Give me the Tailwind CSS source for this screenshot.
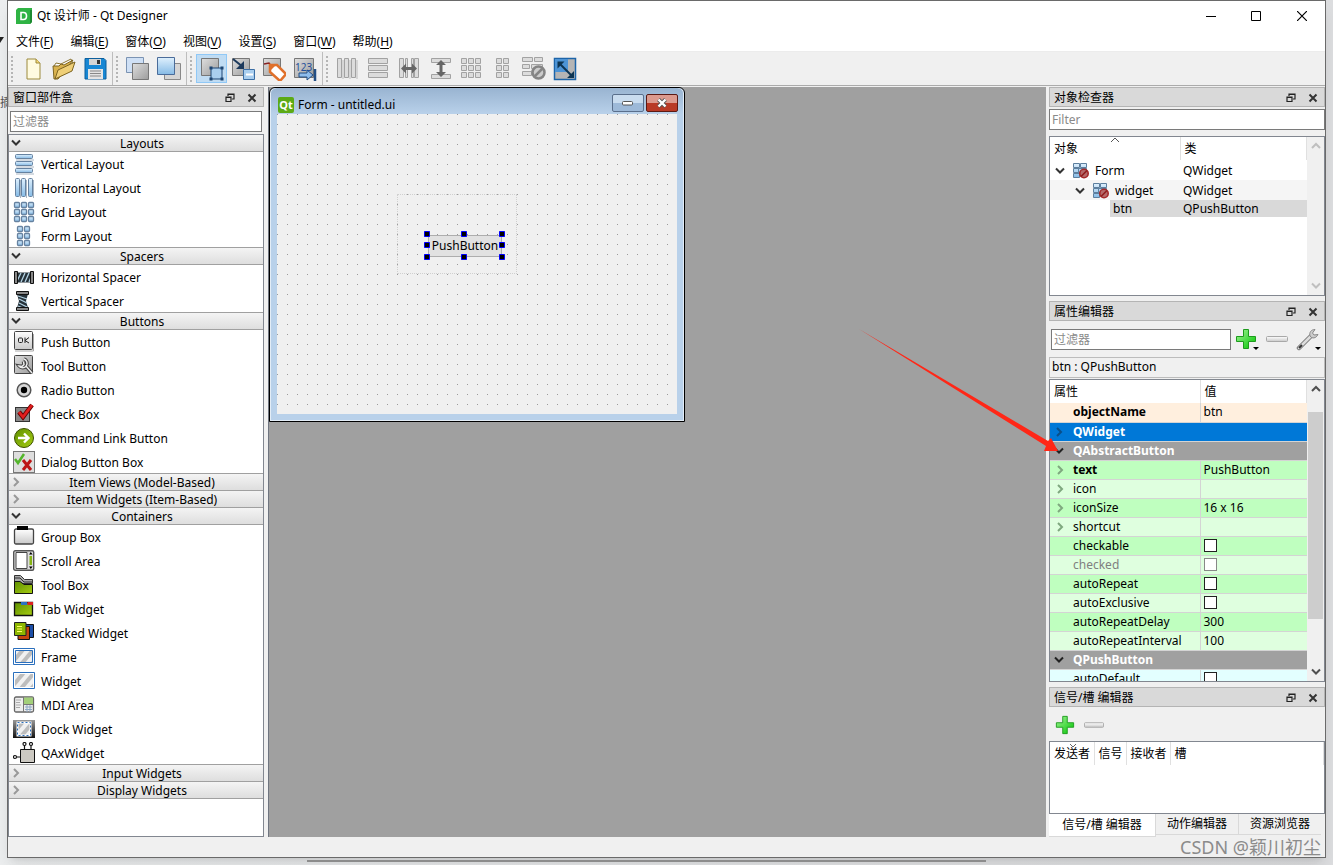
<!DOCTYPE html>
<html lang="zh-CN">
<head>
  <meta charset="UTF-8" />
  <meta name="viewport" content="width=device-width, initial-scale=1" />
  <title>Qt 设计师 - Qt Designer</title>
  <script src="https://cdn.jsdelivr.net/npm/@tailwindcss/browser@4"></script>
  <style>
    body { font-family: "Noto Sans", "Noto Sans CJK SC", sans-serif; }
    u { text-underline-offset: 2px; }
  </style>
</head>
<body class="relative flex h-screen flex-col overflow-hidden bg-linear-to-r from-[#eceeef] to-[#dcdddf] text-xs leading-4 text-black">

<!-- shared gradients and icons -->
<svg class="absolute h-0 w-0" aria-hidden="true">
  <defs>
    <linearGradient id="blue" x1="0" y1="0" x2="0" y2="1"><stop offset="0" stop-color="#dff0fd"/><stop offset="1" stop-color="#86bbe6"/></linearGradient>
    <linearGradient id="grey" x1="0" y1="0" x2="1" y2="1"><stop offset="0" stop-color="#dedede"/><stop offset="1" stop-color="#9c9c9c"/></linearGradient>
    <linearGradient id="pale" x1="0" y1="0" x2="0" y2="1"><stop offset="0" stop-color="#fff"/><stop offset="1" stop-color="#c9c9c9"/></linearGradient>
    <linearGradient id="green" x1="0" y1="0" x2="1" y2="1"><stop offset="0" stop-color="#a5f598"/><stop offset="1" stop-color="#00c400"/></linearGradient>
    <linearGradient id="olive" x1="0" y1="0" x2="1" y2="1"><stop offset="0" stop-color="#5f9000"/><stop offset="1" stop-color="#a6cc12"/></linearGradient>
    <linearGradient id="dark" x1="0" y1="0" x2="0" y2="1"><stop offset="0" stop-color="#999"/><stop offset="1" stop-color="#111"/></linearGradient>
    <pattern id="stripes" width="8" height="8" patternUnits="userSpaceOnUse" patternTransform="rotate(40)"><rect width="8" height="8" fill="#f1f1f1"/><rect width="4" height="8" fill="#bdbdbd"/></pattern>
    <pattern id="dots" width="10" height="10" patternUnits="userSpaceOnUse"><rect width="1" height="1" fill="#9a9a9a"/></pattern>
  </defs>
  <symbol id="down" viewBox="0 0 10 10"><path d="M1 2.500 5 6.500 9 2.500" fill="none" stroke="currentColor" stroke-width="2"/></symbol>
  <symbol id="right" viewBox="0 0 10 10"><path d="M3 1 7 5 3 9" fill="none" stroke="currentColor" stroke-width="2"/></symbol>
  <symbol id="up" viewBox="0 0 10 10"><path d="M1 7 5 3 9 7" fill="none" stroke="currentColor" stroke-width="2"/></symbol>
  <symbol id="float" viewBox="0 0 10 10"><path d="M3 3V1h6v5H7M3 1.500h6M1 4h5v4.500H1zM1 4.500h5" fill="none" stroke="#222" stroke-width="1.200"/></symbol>
  <symbol id="close" viewBox="0 0 10 10"><path d="M1.500 1.500 8.500 8.500M8.500 1.500 1.500 8.500" stroke="#333" stroke-width="2"/></symbol>
  <symbol id="plus" viewBox="0 0 22 22"><path d="M8.500 1.500h5v7h7v5h-7v7h-5v-7h-7v-5h7z" fill="url(#green)" stroke="#1d9b1d"/></symbol>
  <symbol id="minus" viewBox="0 0 22 22"><rect x="0.500" y="8.500" width="21" height="5" rx="1" fill="url(#pale)" stroke="#a8a8a8"/></symbol>

  <!-- toolbox icons -->
  <symbol id="vlay" viewBox="0 0 22 22"><g fill="url(#blue)" stroke="#6682a0"><rect x="2.500" y="1.500" width="17" height="4" rx="1"/><rect x="2.500" y="8.500" width="17" height="4" rx="1"/><rect x="2.500" y="15.500" width="17" height="4" rx="1"/></g><path d="M3 7h18M3 14h18M3 21h18" stroke="#a9b6c4"/></symbol>
  <symbol id="hlay" viewBox="0 0 22 22"><g fill="url(#blue)" stroke="#6682a0"><rect x="2.500" y="1.500" width="4" height="18" rx="1"/><rect x="8.500" y="1.500" width="4" height="18" rx="1"/><rect x="15.500" y="1.500" width="4" height="18" rx="1"/></g><path d="M7.500 3v18M13.500 3v18M20.500 3v18" stroke="#a9b6c4"/></symbol>
  <symbol id="grid" viewBox="0 0 22 22"><g fill="url(#blue)" stroke="#6682a0" stroke-width="1.300"><rect x="1.500" y="1.500" width="5" height="5" rx="1"/><rect x="8.500" y="1.500" width="5" height="5" rx="1"/><rect x="15.500" y="1.500" width="5" height="5" rx="1"/><rect x="1.500" y="8.500" width="5" height="5" rx="1"/><rect x="8.500" y="8.500" width="5" height="5" rx="1"/><rect x="15.500" y="8.500" width="5" height="5" rx="1"/><rect x="1.500" y="15.500" width="5" height="5" rx="1"/><rect x="8.500" y="15.500" width="5" height="5" rx="1"/><rect x="15.500" y="15.500" width="5" height="5" rx="1"/></g></symbol>
  <symbol id="form" viewBox="0 0 22 22"><g fill="url(#blue)" stroke="#6682a0" stroke-width="1.300"><rect x="4.500" y="1.500" width="5" height="5" rx="1"/><rect x="11.500" y="1.500" width="5" height="5" rx="1"/><rect x="4.500" y="8.500" width="5" height="5" rx="1"/><rect x="11.500" y="8.500" width="5" height="5" rx="1"/><rect x="4.500" y="15.500" width="5" height="5" rx="1"/><rect x="11.500" y="15.500" width="5" height="5" rx="1"/></g></symbol>
  <symbol id="hspace" viewBox="0 0 22 22"><path d="M4 6.500h14v10H4z" fill="#26323a"/><path d="M4 15 8 7M8 16 12 7M12 16 16 7M16 16 18 11" stroke="#b4d3e4" stroke-width="1.300"/><path d="M1.500 5.500h3v12h-3zM17.500 5.500h3v12h-3z" fill="#888" stroke="#111"/></symbol>
  <symbol id="vspace" viewBox="0 0 22 22"><path d="M4 4h11l-2 7 2 7H4l2-7z" fill="#26323a"/><path d="M5 6 14 9M6 9 14 13M6 13 14 17M5 16l5 2" stroke="#b4d3e4" stroke-width="1.300"/><path d="M3.500 1.500h12v3h-12zM3.500 17.500h12v3h-12z" fill="#888" stroke="#111"/></symbol>
  <symbol id="push" viewBox="0 0 22 22"><rect x="1.500" y=".5" width="18" height="18" rx="1" fill="url(#pale)" stroke="#444"/><path d="M2 20h18.500V3" fill="none" stroke="#aaa"/><g fill="none" stroke="#222"><rect x="5.500" y="7" width="4" height="4.500" rx="1"/><path d="M12 6.500v5.500M16 6.500l-4 3 4 2.500"/></g></symbol>
  <symbol id="tool" viewBox="0 0 22 22"><rect x="1.500" y=".5" width="18" height="18" rx="1" fill="url(#grey)" stroke="#444"/><path d="M11 4a4.500 4.500 0 1 1-5 7l3 .5 2-2-.5-3M13 11l6 7" fill="none" stroke="#444" stroke-width="3.500"/><path d="M11 4a4.500 4.500 0 1 1-5 7l3 .5 2-2-.5-3M13 11l6 7" fill="none" stroke="#eee" stroke-width="1.500"/></symbol>
  <symbol id="radio" viewBox="0 0 22 22"><circle cx="11" cy="11" r="6.800" fill="#d8d8d8" stroke="#555" stroke-width="1.500"/><circle cx="11" cy="11" r="3.200"/></symbol>
  <symbol id="check" viewBox="0 0 22 22"><rect x="2.500" y="4.500" width="14" height="14" fill="#888" stroke="#333"/><path d="M6 9l4 5L19 2" fill="none" stroke="#600" stroke-width="4.500"/><path d="M6 9l4 5L19 2" fill="none" stroke="#e11d1d" stroke-width="2.800"/></symbol>
  <symbol id="command" viewBox="0 0 22 22"><circle cx="11" cy="11" r="9.500" fill="url(#olive)" stroke="#3d5000"/><path d="M5 11h10M11 6.500l4.500 4.500-4.500 4.500" fill="none" stroke="#fff" stroke-width="2.400"/></symbol>
  <symbol id="dialog" viewBox="0 0 22 22"><rect x=".5" y=".5" width="21" height="21" fill="#dedede" stroke="#777"/><path d="M2 8l3 4 6-9" fill="none" stroke="#54b52c" stroke-width="2.500"/><path d="M10 9l8 10M18 9l-8 10" stroke="#bd1616" stroke-width="3"/></symbol>
  <symbol id="group" viewBox="0 0 22 22"><rect x="1.500" y="3" width="19" height="15" rx="1.500" fill="url(#pale)" stroke="#444" stroke-width="1.300"/><path d="M4 0h11v4H4z"/></symbol>
  <symbol id="scroll" viewBox="0 0 22 22"><rect x=".7" y=".7" width="20" height="19.500" rx="1.500" fill="#ddd" stroke="#555" stroke-width="1.400"/><path d="M3 2.500h11v16H3z" fill="#fff" stroke="#444"/><path d="M16.500 6h2.500v9h-2.500z" fill="#86b414"/><path d="M17.800 2l1.800 2.500H16zM17.800 19l1.800-2.500H16z"/></symbol>
  <symbol id="toolbox" viewBox="0 0 22 22"><path d="M1.500 1.500h6l4 4h8v4h-18z" fill="#aaa" stroke="#333"/><path d="M2 4h5l4 4h8" fill="none" stroke="#333"/><path d="M1.500 7.500H7l4 3h8.500v9h-18z" fill="url(#olive)" stroke="#111"/></symbol>
  <symbol id="tab" viewBox="0 0 22 22"><path d="M1.500 4.500h18v13h-18z" fill="url(#olive)" stroke="#111" stroke-width="1.300"/><path d="M8 4h6v3H8z" fill="#2b73c2"/><path d="M14.500 4H20v3h-5.500z" fill="#d22"/></symbol>
  <symbol id="stack" viewBox="0 0 22 22"><path d="M12 2.500h8.500v13H12z" fill="#1d4fa8" stroke="#111"/><path d="M5 4.500h11.500v13H5z" fill="#c4430e" stroke="#111"/><path d="M1.500 .5h11.500v13H1.500z" fill="#8db600" stroke="#222"/><path d="M4 4.500h5M4 7h5M4 9.500h5" stroke="#ff6"/></symbol>
  <symbol id="frame" viewBox="0 0 22 22"><path d="M.5 2.500h21v16H.5z" fill="#fff" stroke="#2a6fbd"/><path d="M2.500 4.500h17v12h-17z" fill="url(#stripes)" stroke="#2a6fbd"/></symbol>
  <symbol id="widget" viewBox="0 0 22 22"><path d="M.5 2.500h21v16H.5z" fill="#fff" stroke="#2a6fbd"/><path d="M2 4h18v13H2z" fill="url(#stripes)"/></symbol>
  <symbol id="mdi" viewBox="0 0 22 22"><rect x="1.500" y="3" width="19" height="15" rx="1.500" fill="#eee" stroke="#666" stroke-width="1.300"/><path d="M11 3.500h9v7h-9z" fill="#a2cf7a"/><path d="M10.500 3v15M10.500 10.500H20" stroke="#777"/><path d="M3 6h5M3 8.500h4M3 11h5M3 13.500h4" stroke="#aaa"/><path d="M12 13h7M12 15.500h7M14 11v7M17 11v7" stroke="#8fa9c6"/></symbol>
  <symbol id="dock" viewBox="0 0 22 22"><path d="M0 2h22v18H0z" fill="url(#dark)"/><path d="M4.500 4.500h13v13h-13z" fill="url(#stripes)" stroke="#fff" stroke-width="2"/><path d="M4.500 4.500h13v13h-13z" fill="none" stroke="#2a6fbd" stroke-dasharray="2 2"/></symbol>
  <symbol id="ax" viewBox="0 0 22 22"><path d="M7.500 7.500h14v13h-14z" fill="#ccc9c2" stroke="#111"/><path d="M11.500 7V3M18 7V3M7 15H4" stroke="#111" stroke-width="1.200"/><g fill="#fff" stroke="#111" stroke-width="1.200"><circle cx="11.500" cy="2" r="1.500"/><circle cx="18" cy="2" r="1.500"/><circle cx="2" cy="15" r="1.500"/></g></symbol>
  <symbol id="nolayout" viewBox="0 0 16 16"><g fill="url(#blue)" stroke="#5d7f9e"><path d="M.5.500h6v4h-6zM7.500.500h6v4h-6zM.5 5.500h5v4h-5zM5.500 5.500h8v4h-8zM.5 10.500h6v4h-6z"/></g><circle cx="11" cy="10.500" r="4.200" fill="#b56a6a" stroke="#a52a2a" stroke-width="1.600"/><path d="M8 13.500l6-6" stroke="#8f1d1d" stroke-width="1.600"/></symbol>
</svg>

<!-- Main window -->
<div class="mx-[7px] mb-[7px] flex min-h-0 flex-1 flex-col border border-[#6a6a6a] bg-[#f0f0f0] shadow-lg">

  <header class="flex h-[30px] shrink-0 items-center bg-white pl-2">
    <svg class="h-4 w-4" viewBox="0 0 16 16"><path d="M2 0h14v14l-2 2H0V2z" fill="#2fb344"/><path d="M14 16V2h2v12z" fill="#1c8a30"/><path d="M5 4.500h2.500c4 0 4 7 0 7H5z" fill="none" stroke="#fff" stroke-width="1.600"/></svg>
    <h1 class="ml-[5px]">Qt 设计师 - Qt Designer</h1>
    <div class="ml-auto flex">
      <button class="flex h-[28px] w-[45px] items-center justify-center" aria-label="最小化"><svg class="h-[10px] w-[10px]"><path d="M0 5.500h10" stroke="#000"/></svg></button>
      <button class="flex h-[28px] w-[46px] items-center justify-center" aria-label="最大化"><svg class="h-[10px] w-[10px]"><path d="M.5.500h9v9h-9z" fill="none" stroke="#000"/></svg></button>
      <button class="flex h-[28px] w-[46px] items-center justify-center" aria-label="关闭"><svg class="h-[10px] w-[10px]"><path d="M0 0 10 10M10 0 0 10" stroke="#000" stroke-width="1.200"/></svg></button>
    </div>
  </header>

  <nav class="flex h-[21px] shrink-0 items-center gap-[17px] border-b border-[#ececec] bg-white pt-[2px] pl-2">
    <button>文件(<u>F</u>)</button>
    <button>编辑(<u>E</u>)</button>
    <button>窗体(<u>O</u>)</button>
    <button>视图(<u>V</u>)</button>
    <button>设置(<u>S</u>)</button>
    <button>窗口(<u>W</u>)</button>
    <button>帮助(<u>H</u>)</button>
  </nav>

  <div id="toolbar" class="flex h-[34px] shrink-0 items-center border-b border-[#ababab]"></div>

  <div class="flex min-h-0 flex-1 pt-px">

    <!-- Widget box -->
    <aside class="flex w-[256px] shrink-0 flex-col">
      <div class="flex h-5 items-center border border-[#b4b4b4] bg-[#d9d9d9] pt-px pr-[6px] pl-1">
        <h2>窗口部件盒</h2>
        <button class="ml-auto" aria-label="浮动"><svg class="h-[10px] w-[10px]"><use href="#float"/></svg></button>
        <button class="ml-3" aria-label="关闭"><svg class="h-[10px] w-[10px]"><use href="#close"/></svg></button>
      </div>
      <input type="text" placeholder="过滤器" aria-label="过滤部件" class="mx-[2px] mt-1 h-[21px] border border-[#7a7a7a] bg-white px-[2px] placeholder:text-[#8a8a8a]" />
      <div id="widgetBox" class="mt-[2px] min-h-0 flex-1 overflow-hidden border border-[#828790] bg-white"></div>
    </aside>

    <!-- Form canvas -->
    <main class="relative ml-1 min-w-0 flex-1 border-l border-[#6f7580] bg-[#a0a0a0]">
      <section class="absolute top-0 left-0 flex h-[335px] w-[416px] flex-col rounded-t-md border border-black bg-[#b9d1ea] px-[7px] pb-[7px] ring-1 ring-white/60 ring-inset">
        <div class="-mx-[6px] flex h-[26px] shrink-0 items-center rounded-t-md bg-linear-to-b from-[#99b4d1] to-[#b9d1ea] pt-1 pr-[5px] pl-[7px]">
          <div class="mt-1 flex h-4 w-4 items-center justify-center rounded-xs bg-[#5caa15] text-[11px] font-bold text-white">Qt</div>
          <h2 class="mt-1 ml-1">Form - untitled.ui</h2>
          <button class="ml-auto flex h-[18px] w-8 items-center justify-center rounded-xs border border-[#5a6f8c] bg-linear-to-b from-[#c9dcef] from-50% to-[#9db9d8] to-50%" aria-label="最小化窗体"><svg class="h-[6px] w-3"><rect x=".5" y="1.500" width="10" height="3.500" rx="1" fill="#fff" stroke="#555"/></svg></button>
          <button class="ml-[2px] flex h-[18px] w-8 items-center justify-center rounded-xs border border-[#5b1a14] bg-linear-to-b from-[#dc9a8e] from-50% to-[#b93a26] to-50%" aria-label="关闭窗体"><svg class="h-[10px] w-3" viewBox="0 0 12 10"><path d="M2.500 1.500l7 7M9.500 1.500l-7 7" stroke="#555" stroke-width="4"/><path d="M2.500 1.500l7 7M9.500 1.500l-7 7" stroke="#fff" stroke-width="2.400"/></svg></button>
        </div>
        <div class="relative min-h-0 flex-1 bg-[#f0f0f0]">
          <svg class="h-full w-full"><rect width="100%" height="100%" fill="url(#dots)"/></svg>
          <div class="absolute top-20 left-[120px] h-20 w-[120px] border border-dotted border-[#d0d0d0]">
            <button class="absolute top-10 left-[30px] h-[22px] w-[74px] border border-[#adadad] bg-[#e1e1e1]">PushButton</button>
            <svg class="absolute top-[36px] left-[26px] h-[31px] w-[82px]" fill="#000" stroke="#00f"><path d="M.5.500h5v5h-5zM37.500.500h5v5h-5zM75.500.500h5v5h-5zM.5 11.500h5v5h-5zM75.500 11.500h5v5h-5zM.5 23.500h5v5h-5zM37.500 23.500h5v5h-5zM75.500 23.500h5v5h-5z"/></svg>
          </div>
        </div>
      </section>
    </main>

    <!-- Right docks -->
    <aside class="ml-[3px] flex w-[276px] shrink-0 flex-col">
      <div class="flex h-5 shrink-0 items-center border border-[#b4b4b4] bg-[#d9d9d9] pt-px pr-[6px] pl-1">
        <h2>对象检查器</h2>
        <button class="ml-auto" aria-label="浮动"><svg class="h-[10px] w-[10px]"><use href="#float"/></svg></button>
        <button class="ml-3" aria-label="关闭"><svg class="h-[10px] w-[10px]"><use href="#close"/></svg></button>
      </div>
      <input type="text" placeholder="Filter" aria-label="Filter" class="mt-[2px] h-[21px] shrink-0 border border-[#7a7a7a] bg-white px-[2px] placeholder:text-[#8a8a8a]" />
      <div class="mt-[6px] flex h-[160px] shrink-0 border border-[#828790] bg-white">
        <div class="relative min-w-0 flex-1">
          <svg class="absolute top-0 left-[60px] h-[6px] w-[10px]"><path d="M1 5 5 1 9 5" fill="none" stroke="#555"/></svg>
          <table class="w-full table-fixed border-collapse text-left">
            <thead>
              <tr class="h-[23px]">
                <th class="w-[130px] border-r border-[#e0e0e0] pl-1 font-normal">对象</th>
                <th class="border-r border-[#e0e0e0] pl-1 font-normal">类</th>
              </tr>
            </thead>
            <tbody>
              <tr class="h-5">
                <td><div class="flex items-center pt-px pl-[5px]"><svg class="h-[10px] w-[10px] text-[#333]"><use href="#down"/></svg><svg class="ml-2 h-4 w-4"><use href="#nolayout"/></svg><span class="ml-[6px]">Form</span></div></td>
                <td class="pt-px pl-[3px]">QWidget</td>
              </tr>
              <tr class="h-5 bg-[#f5f5f5]">
                <td><div class="flex items-center pt-px pl-[25px]"><svg class="h-[10px] w-[10px] text-[#333]"><use href="#down"/></svg><svg class="ml-2 h-4 w-4"><use href="#nolayout"/></svg><span class="ml-[6px]">widget</span></div></td>
                <td class="pt-px pl-[3px]">QWidget</td>
              </tr>
              <tr class="h-[17px]">
                <td class="pl-[60px]"><div class="bg-[#d9d9d9] pl-[3px] leading-[17px]">btn</div></td>
                <td class="bg-[#d9d9d9] pl-[3px] leading-[17px]">QPushButton</td>
              </tr>
            </tbody>
          </table>
        </div>
        <div class="flex w-[17px] flex-col items-center justify-between bg-[#f0f0f0] py-1 text-[#bfbfbf]">
          <svg class="h-[10px] w-[10px]"><use href="#up"/></svg>
          <svg class="h-[10px] w-[10px]"><use href="#down"/></svg>
        </div>
      </div>

      <div class="mt-[5px] flex h-5 shrink-0 items-center border border-[#b4b4b4] bg-[#d9d9d9] pt-px pr-[6px] pl-1">
        <h2>属性编辑器</h2>
        <button class="ml-auto" aria-label="浮动"><svg class="h-[10px] w-[10px]"><use href="#float"/></svg></button>
        <button class="ml-3" aria-label="关闭"><svg class="h-[10px] w-[10px]"><use href="#close"/></svg></button>
      </div>
      <div class="flex h-9 shrink-0 items-center pr-1 pl-[2px]">
        <input type="text" placeholder="过滤器" aria-label="过滤属性" class="h-[21px] min-w-0 flex-1 border border-[#7a7a7a] bg-white px-[2px] placeholder:text-[#8a8a8a]" />
        <button class="ml-1 pt-[2px]" aria-label="添加动态属性"><svg class="h-6 w-[25px]" viewBox="0 0 25 24"><use href="#plus" width="22" height="22"/><path d="M18 19h6l-3 3z"/></svg></button>
        <button class="ml-[6px]" aria-label="删除动态属性"><svg class="h-[22px] w-[22px]"><use href="#minus"/></svg></button>
        <button class="ml-2 pt-[2px]" aria-label="配置"><svg class="h-6 w-[25px]" viewBox="0 0 25 24"><path d="M3 20 15 8" stroke="#777" stroke-width="4.500" stroke-linecap="round"/><path d="M3 20 15 8" stroke="#ddd" stroke-width="2.500" stroke-linecap="round"/><path d="M19 1.500c-4 0-6 3-5 6.500 2 3 6 2.500 8-1.500l-4 .5-1.500-2z" fill="#ccc" stroke="#888"/><path d="M3 20 6 17" stroke="#333" stroke-width="2"/><path d="M19 19h6l-3 3z"/></svg></button>
      </div>
      <p class="h-[21px] shrink-0 border border-[#bcbcbc] pl-[2px] leading-[18px]">btn : QPushButton</p>
      <div class="mt-px flex min-h-0 flex-1 overflow-hidden border border-[#828790] bg-white">
        <div class="min-w-0 flex-1 overflow-hidden">
          <table class="w-full table-fixed border-collapse text-left">
            <thead>
              <tr class="h-[23px]">
                <th class="w-[150px] border-r border-[#e0e0e0] pl-1 font-normal">属性</th>
                <th class="border-r border-[#e0e0e0] pl-1 font-normal">值</th>
              </tr>
            </thead>
            <tbody id="properties"></tbody>
          </table>
        </div>
        <div class="flex w-[17px] flex-col items-center bg-[#f0f0f0] text-[#505050]">
          <svg class="mt-1 h-[10px] w-[10px] shrink-0"><use href="#up"/></svg>
          <div class="mt-[18px] mb-[48px] w-[15px] flex-1 bg-[#cdcdcd]"></div>
          <svg class="mb-1 h-[10px] w-[10px] shrink-0"><use href="#down"/></svg>
        </div>
      </div>

      <div class="mt-[5px] flex h-5 shrink-0 items-center border border-[#b4b4b4] bg-[#d9d9d9] pt-px pr-[6px] pl-1">
        <h2>信号/槽 编辑器</h2>
        <button class="ml-auto" aria-label="浮动"><svg class="h-[10px] w-[10px]"><use href="#float"/></svg></button>
        <button class="ml-3" aria-label="关闭"><svg class="h-[10px] w-[10px]"><use href="#close"/></svg></button>
      </div>
      <div class="flex h-[34px] shrink-0 items-center gap-[9px] pt-[2px] pl-[6px]">
        <button aria-label="添加连接"><svg class="h-5 w-5"><use href="#plus"/></svg></button>
        <button aria-label="删除连接"><svg class="h-5 w-5"><use href="#minus"/></svg></button>
      </div>
      <div class="relative h-[73px] shrink-0 border border-[#828790] bg-white">
        <svg class="absolute top-px left-[18px] h-[6px] w-[10px]"><path d="M2 1 5 4 8 1" fill="none" stroke="#666"/></svg>
        <table class="w-full border-collapse text-left">
          <tr class="h-[23px]">
            <th class="w-[44px] border-r border-[#e0e0e0] pl-1 font-normal whitespace-nowrap">发送者</th>
            <th class="w-[32px] border-r border-[#e0e0e0] pl-1 font-normal whitespace-nowrap">信号</th>
            <th class="w-[44px] border-r border-[#e0e0e0] pl-1 font-normal whitespace-nowrap">接收者</th>
            <th class="border-r border-[#e0e0e0] pl-1 font-normal">槽</th>
          </tr>
        </table>
      </div>
      <div class="flex h-[23px] shrink-0 items-start" role="tablist">
        <button role="tab" aria-selected="true" class="h-[23px] w-[107px] border-r border-b border-[#d9d9d9] bg-white">信号/槽 编辑器</button>
        <button role="tab" class="h-[21px] w-[83px] border-r border-b border-[#d9d9d9]">动作编辑器</button>
        <button role="tab" class="h-[21px] w-[82px] border-b border-[#d9d9d9]">资源浏览器</button>
      </div>
    </aside>
  </div>

  <footer class="h-5 shrink-0"></footer>
</div>

<!-- Things lying over the window -->
<svg class="absolute top-[329px] right-[275px] h-[126px] w-[200px]" viewBox="0 0 200 126"><path d="M1 0 190 112 193 109 200 122 186 122 188 117Z" fill="#ff2717"/></svg>
<p class="absolute right-[12px] bottom-[6px] text-lg leading-6 text-[#8b8b8b]">CSDN @颖川初尘</p>
<span class="absolute top-[95px] left-0 w-[7px] overflow-hidden whitespace-nowrap text-[#555]">摘</span>
<svg class="absolute top-[37px] left-0 h-[6px] w-1"><path d="M0 0h4L0 6z" fill="#222"/></svg>
<div class="absolute right-[26%] bottom-[3px] left-[23%] h-[2px] bg-[#8c8c8c]"></div>

<script>
  const sections = [
    ["Layouts", [["vlay", "Vertical Layout"], ["hlay", "Horizontal Layout"], ["grid", "Grid Layout"], ["form", "Form Layout"]]],
    ["Spacers", [["hspace", "Horizontal Spacer"], ["vspace", "Vertical Spacer"]]],
    ["Buttons", [["push", "Push Button"], ["tool", "Tool Button"], ["radio", "Radio Button"], ["check", "Check Box"], ["command", "Command Link Button"], ["dialog", "Dialog Button Box"]]],
    ["Item Views (Model-Based)", []],
    ["Item Widgets (Item-Based)", []],
    ["Containers", [["group", "Group Box"], ["scroll", "Scroll Area"], ["toolbox", "Tool Box"], ["tab", "Tab Widget"], ["stack", "Stacked Widget"], ["frame", "Frame"], ["widget", "Widget"], ["mdi", "MDI Area"], ["dock", "Dock Widget"], ["ax", "QAxWidget"]]],
    ["Input Widgets", []],
    ["Display Widgets", []]
  ];

  document.getElementById('widgetBox').innerHTML = sections.map(([name, items]) => `
    <button class="flex h-[17px] w-full items-center border-b border-[#a0a0a0] bg-linear-to-b from-[#f4f4f4] to-[#dedede] pl-[2px] ${items.length ? 'text-[#333]' : 'text-[#999]'}">
      <svg class="h-[10px] w-[10px]"><use href="${items.length ? '#down' : '#right'}"/></svg>
      <span class="flex-1 pt-[2px] text-center text-black">${name}</span>
    </button>
    ${items.length ? `<ul class="-mt-px border-b border-[#a0a0a0]">${items.map(([icon, label]) => `
      <li class="flex h-6 items-center gap-[6px] pt-[2px] pl-1"><svg class="h-[22px] w-[22px]"><use href="#${icon}"/></svg><span class="pt-[2px]">${label}</span></li>`).join('')}</ul>` : ''}
  `).join('');

  // name, value, kind, row colour
  const props = [
    ["objectName", "btn", "bold", "bg-[#ffefde]"],
    ["QWidget", "", "closed", "bg-[#0078d7]"],
    ["QAbstractButton", "", "group", "bg-[#a0a0a0]"],
    ["text", "PushButton", "bold tree", "bg-[#bfffbf]"],
    ["icon", "", "tree", "bg-[#dfffdf]"],
    ["iconSize", "16 x 16", "tree", "bg-[#bfffbf]"],
    ["shortcut", "", "tree", "bg-[#dfffdf]"],
    ["checkable", "", "check", "bg-[#bfffbf]"],
    ["checked", "", "check disabled", "bg-[#dfffdf]"],
    ["autoRepeat", "", "check", "bg-[#bfffbf]"],
    ["autoExclusive", "", "check", "bg-[#dfffdf]"],
    ["autoRepeatDelay", "300", "", "bg-[#bfffbf]"],
    ["autoRepeatInterval", "100", "", "bg-[#dfffdf]"],
    ["QPushButton", "", "group", "bg-[#a0a0a0]"],
    ["autoDefault", "", "check", "bg-[#e3ffff]"]
  ];

  document.getElementById('properties').innerHTML = props.map(([name, value, kind, bg]) => {
    if (kind === 'group' || kind === 'closed') {
      return `<tr class="h-[19px] border-b border-[#d4d4d4] ${bg}"><td colspan="2"><div class="flex items-center pl-1 font-bold text-white">
        <svg class="h-[10px] w-[10px] ${kind === 'group' ? 'text-[#222]' : 'text-[#0a4f8a]'}"><use href="${kind === 'group' ? '#down' : '#right'}"/></svg><span class="ml-[9px]">${name}</span></div></td></tr>`;
    }
    const arrow = kind.includes('tree') ? '<use href="#right"/>' : '';
    const off = kind.includes('disabled');
    const cell = kind.includes('check')
      ? `<input type="checkbox" aria-label="${name}" ${off ? 'disabled' : ''} class="block h-[13px] w-[13px] appearance-none border bg-white ${off ? 'border-[#888]' : 'border-[#222]'}" />`
      : value;
    return `<tr class="h-[19px] border-b border-[#d4d4d4] ${bg}">
      <td class="border-r border-[#d4d4d4]"><div class="flex items-center pl-[5px]"><svg class="h-[10px] w-[10px] text-[#7fa87f]">${arrow}</svg><span class="ml-2 ${kind.includes('bold') ? 'font-bold' : ''} ${off ? 'text-[#808080]' : ''}">${name}</span></div></td>
      <td class="pl-[3px]">${cell}</td></tr>`;
  }).join('');

  const g = 'fill="#dcdcdc" stroke="#a2a2a2"';
  const tools = [
    [
      ["新建", '<path d="M6 2h9l4 4v16H6z" fill="#fffbe0" stroke="#9c8a3c"/><path d="M15 2v4h4" fill="#f5d878" stroke="#9c8a3c"/>'],
      ["打开", '<path d="M2 9 4 6l5 1 10-5 2 5-12 12z" fill="#fff" stroke="#8a7434"/><path d="M1 9h6l2-2 3 1 9-5-3 4L6 22H2z" fill="#d9b24e" stroke="#7d6420"/><path d="M3 22 6 13l17-8-3 9z" fill="#efcf77" stroke="#7d6420"/>'],
      ["保存", '<path d="M2 1.500h19l2 2V22H2z" fill="#1787d4" stroke="#0d5f9c"/><path d="M6 2h12v6H6z" fill="#d5d5d5"/><path d="M14 3h3v4h-3z" fill="#333"/><path d="M5 12h15v10H5z" fill="#e4e4e4"/><path d="M7 14h11M7 16.500h11M7 19h11" stroke="#888"/>']
    ],
    [
      ["后置", '<path d="M.5.500h17v15H.5z" fill="#cfe0f5" stroke="#7b93b3"/><path d="M6.500 6.500h16v16h-16z" fill="url(#grey)" stroke="#777"/>'],
      ["前置", '<path d="M7.500 6.500h16v16h-16z" fill="#d5d5d5" stroke="#888"/><path d="M.5.500h17v17H.5z" fill="url(#blue)" stroke="#4a6c9a"/>']
    ],
    [
      ["编辑部件", '<path d="M1.500 1.500h17v17h-17z" fill="url(#grey)" stroke="#777"/><path d="M11 11h11v11H11z" fill="#a9ceef" stroke="#1d4572"/><path d="M9.500 9.500h3v3h-3zM20.500 9.500h3v3h-3zM9.500 20.500h3v3h-3zM20.500 20.500h3v3h-3z" fill="#1d4572"/>'],
      ["编辑信号/槽", '<path d="M1.500 1.500h17v17h-17z" fill="url(#grey)" stroke="#777"/><path d="M12.500 12.500h11v10h-11z" fill="#a9ceef" stroke="#3c6ea5"/><path d="M15 17.500h7" stroke="#fff" stroke-width="2"/><path d="M2 2 12 10" stroke="#1d3a5c" stroke-width="2"/><path d="M13 4v8H5z" fill="#1d3a5c"/>'],
      ["编辑伙伴", '<path d="M1.500 1.500h17v17h-17z" fill="url(#grey)" stroke="#777"/><path d="M2 7l5-1 3 4" fill="none" stroke="#822" stroke-width="1.500"/><path d="M8 8h7l9 9-6 7-10-9z" fill="#fff" stroke="#e0702b" stroke-width="2.500"/><path d="M8 8h6l-6 6z" fill="#e0702b"/>'],
      ["编辑 Tab 顺序", '<path d="M1.500 1.500h19v19h-19z" fill="url(#grey)" stroke="#777"/><path d="M6 16h8v-3l6 5-6 5v-3H6z" fill="#8ebcec" stroke="#234f85"/><path d="M22 12v12" stroke="#234f85" stroke-width="2.500"/><text x="2" y="14" font-size="10" fill="#1f4f9a">123</text>']
    ],
    [
      ["水平布局", `<g ${g}><path d="M1.500 1.500h4v19h-4zM8.500 1.500h4v19h-4zM15.500 1.500h4v19h-4z"/></g><path d="M7 3v19M14 3v19M21 3v19" stroke="#bbb"/>`],
      ["垂直布局", `<g ${g}><path d="M1.500 1.500h19v5h-19zM1.500 8.500h19v5h-19zM1.500 15.500h19v5h-19z"/></g>`],
      ["水平分裂器", `<g ${g}><path d="M1.500 1.500h4v19h-4zM16.500 1.500h4v19h-4zM7.500 1.500h2v19h-2zM13.500 1.500h2v19h-2z"/></g><path d="M3 11.500l5-5V10h6V6.500l5 5-5 5V13H8v3.500z" fill="#666"/>`],
      ["垂直分裂器", `<g ${g}><path d="M2.500 1.500h19v4h-19zM2.500 17.500h19v4h-19z"/></g><path d="M12 3l5 5h-3.500v7H17l-5 5-5-5h3.500V8H7z" fill="#666"/>`],
      ["栅格布局", `<g ${g}><path d="M1.500 1.500h5v5h-5zM8.500 1.500h5v5h-5zM15.500 1.500h5v5h-5zM1.500 8.500h5v5h-5zM8.500 8.500h5v5h-5zM15.500 8.500h5v5h-5zM1.500 15.500h5v5h-5zM8.500 15.500h5v5h-5zM15.500 15.500h5v5h-5z"/></g>`],
      ["窗体布局", `<g ${g}><path d="M5.500 1.500h5v5h-5zM12.500 1.500h5v5h-5zM5.500 8.500h5v5h-5zM12.500 8.500h5v5h-5zM5.500 15.500h5v5h-5zM12.500 15.500h5v5h-5z"/></g>`],
      ["打破布局", `<g ${g}><path d="M.5.500h10v4H.5zM12.500.500h8v4h-8zM.5 7.500h7v4h-7zM9.500 7.500h11v4h-11zM.5 14.500h9v4H.500z"/></g><circle cx="16.500" cy="15.500" r="6" fill="#ccc" stroke="#858585" stroke-width="2.500"/><path d="M13 19l7-7" stroke="#858585" stroke-width="2.500"/>`],
      ["调整大小", '<path d="M1.500 1.500h21v21h-21z" fill="#b5b5b5" stroke="#1d64a8" stroke-width="1.500"/><path d="M2 2h13v13H2z" fill="#4d94d6"/><path d="M6 6 19 19" stroke="#0d3553" stroke-width="2"/><path d="M4.500 4.500h7l-7 7zM21 21h-7l7-7z" fill="#0d3553"/>']
    ]
  ];

  document.getElementById('toolbar').innerHTML = tools.map(group => `
    <div class="ml-[3px] h-[26px] w-[2px] border-l-2 border-dotted border-[#b5b5b5]"></div>
    <div class="flex pr-[2px] pl-1">${group.map(([label, art]) => `
      <button aria-label="${label}" class="flex h-[29px] w-[31px] items-center justify-center ${label === '编辑部件' ? 'border border-[#90c8f6] bg-[#c0dcf3]' : ''}"><svg class="h-6 w-6" viewBox="0 0 24 24">${art}</svg></button>`).join('')}</div>
    ${group.length < 8 ? '<div class="h-full w-px bg-[#bdbdbd]"></div>' : ''}
  `).join('');
</script>
</body>
</html>
